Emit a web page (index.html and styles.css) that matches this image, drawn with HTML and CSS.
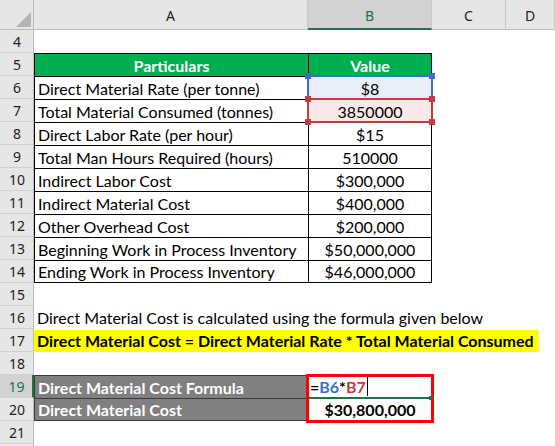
FILE: index.html
```html
<!DOCTYPE html>
<html>
<head>
<meta charset="utf-8">
<link rel="stylesheet" href="styles.css">
</head>
<body>
<div class="sheet">
  <div class="row head">
    <div class="corner"><svg width="33" height="29" viewBox="0 0 33 29"><polygon points="31,12 31,27 16,27" fill="#b4b4b4"/></svg></div>
    <div class="colh">A</div>
    <div class="colh sel">B</div>
    <div class="colh">C</div>
    <div class="colh">D</div>
  </div>
  <div class="row"><div class="rn">4</div><div class="c"></div></div>
  <div class="row"><div class="rn">5</div><div class="c t th l">Particulars</div><div class="c t th r">Value</div></div>
  <div class="row"><div class="rn">6</div><div class="c t">Direct Material Rate (per tonne)</div><div class="c t v r ref-b">$8</div></div>
  <div class="row"><div class="rn">7</div><div class="c t">Total Material Consumed (tonnes)</div><div class="c t v r ref-r">3850000</div></div>
  <div class="row"><div class="rn">8</div><div class="c t">Direct Labor Rate (per hour)</div><div class="c t v r">$15</div></div>
  <div class="row"><div class="rn">9</div><div class="c t">Total Man Hours Required (hours)</div><div class="c t v r">510000</div></div>
  <div class="row"><div class="rn">10</div><div class="c t">Indirect Labor Cost</div><div class="c t v r">$300,000</div></div>
  <div class="row"><div class="rn">11</div><div class="c t">Indirect Material Cost</div><div class="c t v r">$400,000</div></div>
  <div class="row"><div class="rn">12</div><div class="c t">Other Overhead Cost</div><div class="c t v r">$200,000</div></div>
  <div class="row"><div class="rn">13</div><div class="c t">Beginning Work in Process Inventory</div><div class="c t v r">$50,000,000</div></div>
  <div class="row"><div class="rn">14</div><div class="c t b">Ending Work in Process Inventory</div><div class="c t v r b">$46,000,000</div></div>
  <div class="row"><div class="rn">15</div><div class="c"></div></div>
  <div class="row"><div class="rn">16</div><div class="c span">Direct Material Cost is calculated using the formula given below</div></div>
  <div class="row"><div class="rn">17</div><div class="c span"><span class="yellow">Direct Material Cost = Direct Material Rate * Total Material Consumed</span></div></div>
  <div class="row"><div class="rn">18</div><div class="c"></div></div>
  <div class="row"><div class="rn sel">19</div><div class="c grey">Direct Material Cost Formula</div><div class="c formula">=<span class="fb">B6</span>*<span class="fr">B7</span><span class="caret"></span></div></div>
  <div class="row"><div class="rn">20</div><div class="c grey gb">Direct Material Cost</div><div class="c result">$30,800,000</div></div>
  <div class="row"><div class="rn">21</div><div class="c"></div></div>
  <div class="row"><div class="rn"></div><div class="c"></div></div>

  <div class="box-b"><i class="q q1"></i><i class="q q2"></i></div>
  <div class="box-r"><i class="q q1"></i><i class="q q2"></i><i class="q q3"></i><i class="q q4"></i></div>
  <div class="box-red"></div>
  <div class="active"><i></i></div>
</div>
</body>
</html>
```
FILE: styles.css
```css
* { box-sizing: border-box; }
html, body { margin: 0; padding: 0; background: #fff; }
body { width: 555px; height: 446px; overflow: hidden; }

.sheet {
  position: relative;
  font-family: Lato, "Liberation Sans", sans-serif;
  font-size: 16px;
  color: #000;
}

.row {
  display: grid;
  grid-template-columns: 34px 274px 124px 74px 1fr;
  height: 23px;
}
.row.head { height: 30px; background: #e6e6e6; }

.corner {
  border-right: 1px solid #bcbcbc;
  border-bottom: 1px solid #bcbcbc;
  line-height: 0;
}
.colh {
  font-family: "Noto Sans", sans-serif;
  font-size: 14px;
  color: #222;
  display: flex;
  align-items: center;
  justify-content: center;
  padding-top: 2px;
  border-right: 1px solid #c8c8c8;
  border-bottom: 1px solid #bcbcbc;
}
.colh.sel {
  background: #d2d2d2;
  color: #217346;
  border-bottom: 2px solid #217346;
}

.rn {
  background: #e6e6e6;
  font-family: "Noto Sans", sans-serif;
  font-size: 14px;
  color: #222;
  display: flex;
  align-items: center;
  justify-content: center;
  padding-left: 1px;
  border-right: 1px solid #bcbcbc;
  border-bottom: 1px solid #d0d0d0;
}
.rn.sel {
  background: #d2d2d2;
  color: #217346;
  border-right: 2px solid #217346;
}

.c {
  display: flex;
  align-items: center;
  padding-left: 3px;
  white-space: nowrap;
}
.c.t {
  border-top: 1px solid #000;
  border-left: 1px solid #000;
}
.c.t.r { border-right: 1px solid #000; }
.c.t.b { border-bottom: 1px solid #000; }
.c.v { justify-content: center; padding-left: 0; }
.c.th {
  background: #00b050;
  color: #fff;
  font-weight: 700;
  justify-content: center;
  padding-left: 0;
}
.c.ref-b { background: #e9eff8; }
.c.ref-r { background: #f9e8e8; }

.c.span { grid-column: 2 / -1; }
.yellow {
  display: flex;
  align-items: center;
  background: #ffff00;
  font-weight: 700;
  width: 505px;
  height: 22px;
  margin-left: -3px;
  padding-left: 3px;
}

.c.grey {
  background: #808080;
  color: #fff;
  font-weight: 700;
  border-top: 1px solid #3a3a3a;
  border-left: 1px solid #3a3a3a;
}
.c.grey.gb { border-bottom: 1px solid #3a3a3a; }

.c.formula {
  font-weight: 700;
  padding-left: 2px;
}
.fb { color: #3c6fc4; }
.fr { color: #c43c3c; }
.caret {
  display: inline-block;
  width: 1px;
  height: 19px;
  background: #000;
  margin-left: 1px;
}
.c.result {
  font-weight: 700;
  justify-content: center;
  padding-left: 0;
}

/* overlays */
.box-b {
  position: absolute;
  left: 307px; top: 75px;
  width: 126px; height: 25px;
  border: 2px solid #3c6fc4;
}
.box-r {
  position: absolute;
  left: 307px; top: 98px;
  width: 126px; height: 25px;
  border: 2px solid #c43c3c;
}
.q {
  position: absolute;
  width: 6px; height: 6px;
}
.box-b .q { background: #3c6fc4; }
.box-r .q { background: #c43c3c; }
.q1 { left: -4px; top: -4px; }
.q2 { right: -4px; top: -4px; }
.q3 { left: -4px; bottom: -4px; }
.q4 { right: -4px; bottom: -4px; }

.box-red {
  position: absolute;
  left: 306px; top: 374px;
  width: 128px; height: 49px;
  border: 3px solid #ff0000;
}
.active {
  position: absolute;
  left: 309px; top: 397px;
  width: 122px; height: 2px;
  background: #217346;
}
.active i {
  position: absolute;
  right: -2px; top: -1px;
  width: 4px; height: 4px;
  background: #217346;
}
```
